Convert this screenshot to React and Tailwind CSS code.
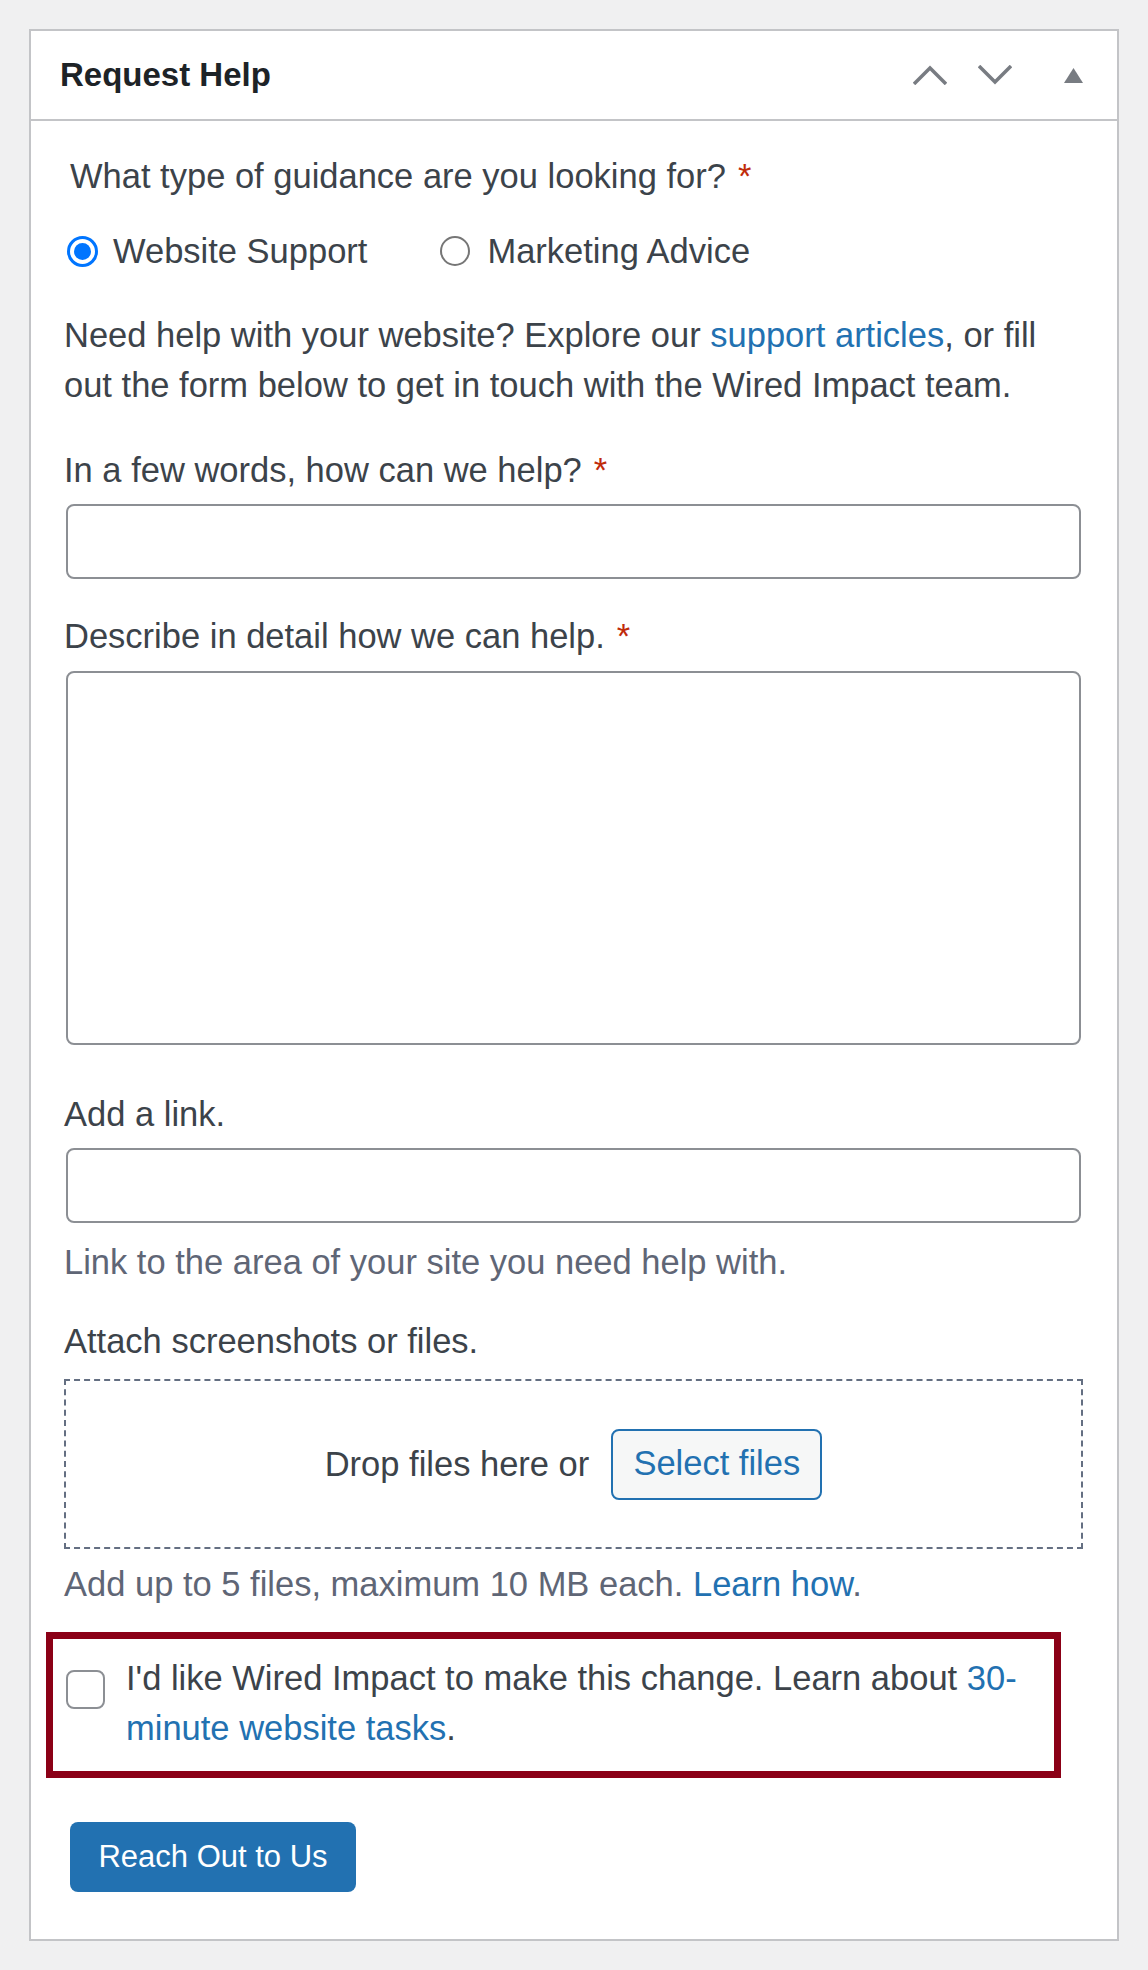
import { useState } from "react";

const font = { fontFamily: '"Liberation Sans", Arial, sans-serif' };

function Radio({ checked }) {
  return checked ? (
    <span className="flex h-[31px] w-[31px] shrink-0 items-center justify-center rounded-full border-[3px] border-[#0075ff] bg-white">
      <span className="h-[17px] w-[17px] rounded-full bg-[#0075ff]" />
    </span>
  ) : (
    <span className="h-[30px] w-[30px] shrink-0 rounded-full border-2 border-[#767676] bg-white" />
  );
}

function Label({ children, required }) {
  return (
    <div className="h-[50px] leading-[50px] text-[#3c434a]">
      {children}
      {required && <span className="ml-[12px] text-[#c02b0a]">*</span>}
    </div>
  );
}

export default function App() {
  const [type, setType] = useState("support");

  return (
    <div className="min-h-screen bg-[#f0f0f1] p-[29px]" style={font}>
      <div className="border-2 border-[#c3c4c7] bg-white">
        {/* header */}
        <div className="flex h-[90px] items-center justify-between border-b-2 border-[#c3c4c7] pl-[29px] pr-[34px]">
          <h2 className="text-[33px] font-bold text-[#1d2327]">Request Help</h2>
          <div className="flex items-center">
            <svg width="34" height="20" viewBox="0 0 34 20" className="mr-[31px]">
              <polyline points="1,19 17,3 33,19" fill="none" stroke="#787c82" strokeWidth="3.5" />
            </svg>
            <svg width="34" height="20" viewBox="0 0 34 20" className="mr-[52px]">
              <polyline points="1,1 17,17 33,1" fill="none" stroke="#787c82" strokeWidth="3.5" />
            </svg>
            <svg width="19" height="15" viewBox="0 0 19 15">
              <polygon points="9.5,0 19,15 0,15" fill="#787c82" />
            </svg>
          </div>
        </div>

        {/* body */}
        <div className="pb-[47px] pl-[33px] pr-[34px] pt-[30px] text-[34.5px] text-[#3c434a]">
          <div className="pl-[6px]">
            <Label required>What type of guidance are you looking for?</Label>
          </div>

          <div className="mt-[25px] flex h-[50px] items-center pl-[3px]">
            <button className="flex items-center" onClick={() => setType("support")}>
              <Radio checked={type === "support"} />
              <span className="ml-[15px] leading-[50px]">Website Support</span>
            </button>
            <button className="ml-[73px] flex items-center" onClick={() => setType("marketing")}>
              <Radio checked={type === "marketing"} />
              <span className="ml-[17px] leading-[50px]">Marketing Advice</span>
            </button>
          </div>

          <p className="mt-[34px] w-[990px] leading-[50px]">
            Need help with your website? Explore our{" "}
            <a className="text-[#2271b1]">support articles</a>, or fill out the form below to get in touch with the Wired
            Impact team.
          </p>

          <div className="mt-[35px]">
            <Label required>In a few words, how can we help?</Label>
          </div>
          <input className="mx-[2px] mt-[9px] block h-[75px] w-[1015px] rounded-[8px] border-2 border-[#8c8f94] bg-white" />

          <div className="mt-[32px]">
            <Label required>Describe in detail how we can help.</Label>
          </div>
          <textarea className="mx-[2px] mt-[10px] block h-[374px] w-[1015px] resize-none rounded-[8px] border-2 border-[#8c8f94] bg-white" />

          <div className="mt-[44px]">
            <Label>Add a link.</Label>
          </div>
          <input className="mx-[2px] mt-[9px] block h-[75px] w-[1015px] rounded-[8px] border-2 border-[#8c8f94] bg-white" />
          <div className="mt-[14px] h-[50px] leading-[50px] text-[#5f6676]">Link to the area of your site you need help with.</div>

          <div className="mt-[29px]">
            <Label>Attach screenshots or files.</Label>
          </div>
          <div className="mt-[13px] flex h-[170px] w-[1019px] items-center justify-center border-2 border-dashed border-[#646f82]">
            <span className="leading-[50px]">Drop files here or</span>
            <button className="ml-[22px] h-[71px] w-[211px] rounded-[8px] border-2 border-[#2271b1] bg-[#f6f7f7] text-[#2271b1]">
              Select files
            </button>
          </div>
          <div className="mt-[10px] h-[50px] leading-[50px] text-[#5f6676]">
            Add up to 5 files, maximum 10 MB each. <a className="text-[#2271b1]">Learn how</a>.
          </div>

          <div className="-ml-[18px] mt-[23px] flex w-[1015px] border-[7px] border-[#8b0016] pb-[18px] pl-[13px] pr-[14px] pt-[14px]">
            <span className="mt-[17px] h-[39px] w-[39px] shrink-0 rounded-[8px] border-2 border-[#8c8f94] bg-white" />
            <p className="ml-[21px] leading-[50px]">
              I'd like Wired Impact to make this change. Learn about{" "}
              <a className="text-[#2271b1]">30-minute website tasks</a>.
            </p>
          </div>

          <button className="ml-[6px] mt-[44px] h-[70px] w-[286px] rounded-[8px] bg-[#2271b1] text-[31px] text-white">
            Reach Out to Us
          </button>
        </div>
      </div>
    </div>
  );
}
